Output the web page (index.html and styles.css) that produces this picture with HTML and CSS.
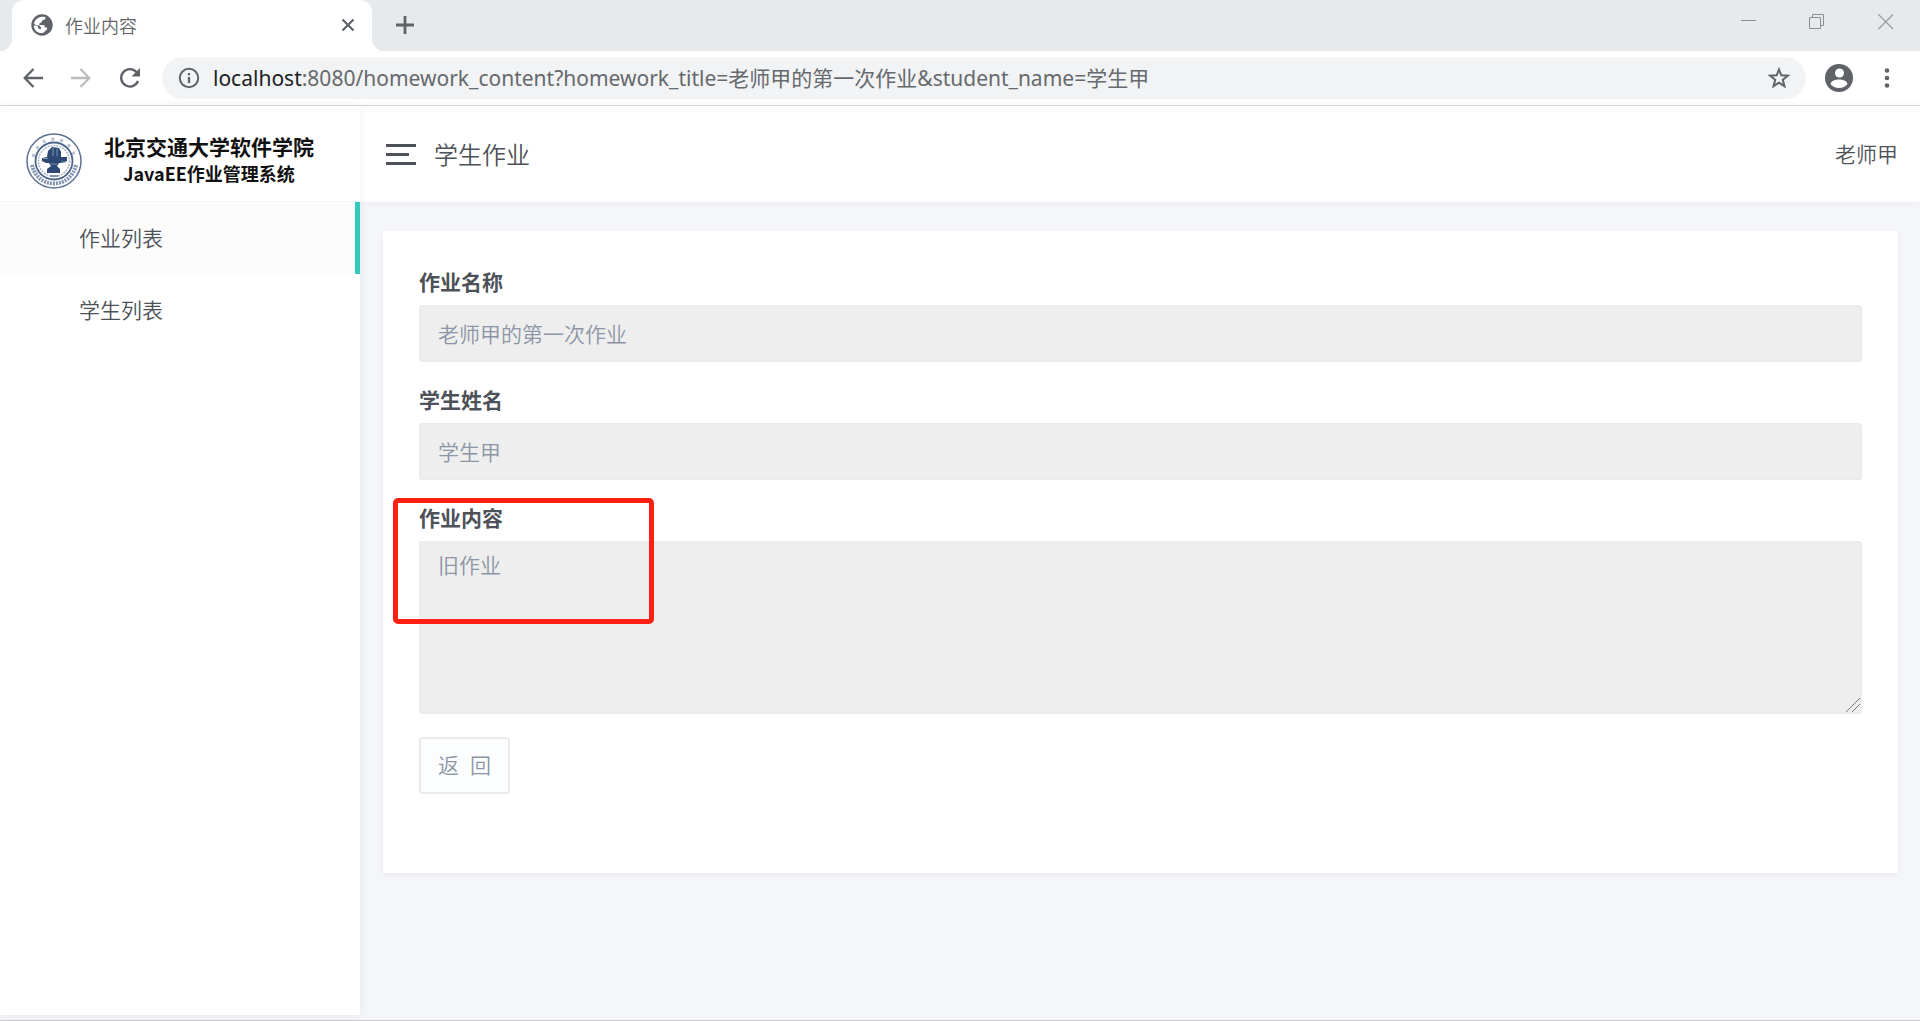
FILE: index.html
```html
<!DOCTYPE html>
<html lang="zh-CN">

<head>
    <meta charset="UTF-8">
    <meta name="viewport" content="width=device-width, initial-scale=1.0">
    <title>作业内容</title>
    <link rel="stylesheet" href="styles.css">
</head>

<body>
    <!-- browser window -->
    <div class="tab-strip">
        <div class="tab-edge"></div>
        <div class="tab">
            <svg class="tab-icon" width="22" height="22" viewBox="0 0 22 22">
                <circle cx="11" cy="11" r="10.700" fill="#5f6368"/>
                <path d="M10.500 2.800C13 2.500 14.500 3 14.500 3.500C14.800 5.500 13 6 11.500 6.200C10.500 6.500 11.500 8.500 9.500 8.800C8 9 8.500 10.500 8 11H12.500C14 11.500 13.500 13 14 13.500H16V15.500L12 19C7 19.800 3 16.500 2.600 11.500L6 12C7.500 12.500 7 15 8.500 15H10V13.500L8.500 11.500H5L3 9.500C4 5.500 7 3.200 10.500 2.800Z" fill="#fff"/>
                <path d="M3 9L6.500 10.500H8.500L7.500 7.500L5 6Z" fill="#fff"/>
            </svg>
            <span class="tab-title">作业内容</span>
            <button class="icon-btn" type="button" aria-label="关闭标签页">
                <svg width="14" height="14" viewBox="0 0 14 14"><path d="M1.500 1.500L12.500 12.500M12.500 1.500L1.500 12.500" stroke="#5f6368" stroke-width="2.200"/></svg>
            </button>
        </div>
        <div class="tab-rest">
            <button class="icon-btn" type="button" aria-label="新标签页">
                <svg width="18" height="18" viewBox="0 0 18 18"><path d="M9 0V18M0 9H18" stroke="#5f6368" stroke-width="2.800"/></svg>
            </button>
            <div class="window-buttons">
                <button class="icon-btn" type="button" aria-label="最小化">
                    <svg width="16" height="16" viewBox="0 0 16 16"><path d="M1 6.500H16" stroke="#8b8e90"/></svg>
                </button>
                <button class="icon-btn" type="button" aria-label="还原">
                    <svg width="16" height="16" viewBox="0 0 16 16"><path d="M.5 3.500H11.500V14.500H.5ZM3.500 3.500V.5H14.500V11.500H11.500" fill="none" stroke="#8b8e90"/></svg>
                </button>
                <button class="icon-btn" type="button" aria-label="关闭">
                    <svg width="16" height="16" viewBox="0 0 16 16"><path d="M.5 .5L15 15M15 .5L.5 15" stroke="#999c9e" stroke-width="1.200"/></svg>
                </button>
            </div>
        </div>
    </div>

    <div class="toolbar">
        <div class="nav-buttons">
            <button class="icon-btn" type="button" aria-label="后退">
                <svg width="20" height="20" viewBox="0 0 20 20"><path d="M20 10H2M10.500 1L1.700 10L10.500 19" fill="none" stroke="#5f6368" stroke-width="2.300"/></svg>
            </button>
            <button class="icon-btn" type="button" aria-label="前进">
                <svg width="20" height="20" viewBox="0 0 20 20"><path d="M0 10H18M9.500 1L18.300 10L9.500 19" fill="none" stroke="#babcbe" stroke-width="2.300"/></svg>
            </button>
            <button class="icon-btn" type="button" aria-label="刷新">
                <svg width="22" height="22" viewBox="0 0 22 22"><path d="M17.500 5.200A8.700 8.700 0 1 0 19 14" fill="none" stroke="#5f6368" stroke-width="2.400"/><path d="M21 1V9.500H12.500Z" fill="#5f6368"/></svg>
            </button>
        </div>
        <div class="address">
            <svg width="22" height="22" viewBox="0 0 22 22"><circle cx="11" cy="11" r="9.200" fill="none" stroke="#5f6368" stroke-width="2"/><path d="M11 10V16M11 6V8.300" stroke="#5f6368" stroke-width="2.300"/></svg>
            <span class="url"><b>localhost</b>:8080/homework_content?homework_title=老师甲的第一次作业&amp;student_name=学生甲</span>
            <button class="icon-btn" type="button" aria-label="收藏">
                <svg width="22" height="22" viewBox="0 0 22 22"><path d="M11 2.500L13.300 8.300L19.800 8.700L14.800 12.800L16.500 19.200L11 15.700L5.500 19.200L7.200 12.800L2.200 8.700L8.700 8.300Z" fill="none" stroke="#5f6368" stroke-width="2"/></svg>
            </button>
        </div>
        <button class="icon-btn" type="button" aria-label="用户">
            <svg width="28" height="28" viewBox="0 0 28 28"><circle cx="14" cy="14" r="14" fill="#5f6368"/><circle cx="14.500" cy="9" r="4.500" fill="#fff"/><path d="M5.500 20C6.500 16.500 10.500 15.500 14 15.500S21.500 16.500 22.500 20C20.500 22.500 17.500 24 14 24S7.500 22.500 5.500 20Z" fill="#fff"/></svg>
        </button>
        <button class="icon-btn" type="button" aria-label="菜单">
            <svg width="6" height="22" viewBox="0 0 6 22"><g fill="#5f6368"><circle cx="3" cy="3.500" r="2.300"/><circle cx="3" cy="11" r="2.300"/><circle cx="3" cy="18.500" r="2.300"/></g></svg>
        </button>
    </div>

    <!-- page -->
    <div class="layout">
        <aside class="sidebar">
            <div class="logo">
                <svg width="56" height="56" viewBox="0 0 56 56">
                    <circle cx="28" cy="28" r="27" fill="#fff" stroke="#5d7193" stroke-width="1.500"/>
                    <path d="M7 24C10 13 18 6 28 6S46 13 49 24" fill="none" stroke="#b9c3d2" stroke-width="3" stroke-dasharray="3 6"/>
                    <path d="M6 32C8.500 43 17 50.500 28 50.500S47.500 43 50 32" fill="none" stroke="#8394b0" stroke-width="4" stroke-dasharray="2 1"/>
                    <circle cx="28" cy="28" r="18.500" fill="#fff" stroke="#4d648a" stroke-width="1.800"/>
                    <circle cx="28" cy="28" r="15.500" fill="none" stroke="#a9b6c9" stroke-width="1.500" stroke-dasharray="2 1"/>
                    <path d="M22 18L26 14L33 15L35 19V24H41V28L36 30H33L31 33L34 36V40H21V36L25 33L23 30H20L16 28V25L21 24Z" fill="#2d4874"/>
                    <path d="M17 25.500H22M35 29H40M25 31H31M27 15V23M31 16V23" stroke="#8193b0"/>
                    <path d="M24 43H32" stroke="#8193b0" stroke-width="2"/>
                </svg>
                <div class="logo-text">
                    <div class="logo-school">北京交通大学软件学院</div>
                    <div class="logo-system">JavaEE作业管理系统</div>
                </div>
            </div>
            <nav class="menu">
                <a class="menu-item active" href="#">作业列表</a>
                <a class="menu-item" href="#">学生列表</a>
            </nav>
        </aside>

        <div class="main">
            <header class="topbar">
                <button class="toggler" type="button" aria-label="切换菜单">
                    <span></span>
                    <span class="short"></span>
                    <span></span>
                </button>
                <h1>学生作业</h1>
                <a class="user" href="#">老师甲</a>
            </header>

            <form class="card">
                <div class="form-group">
                    <label for="title">作业名称</label>
                    <input type="text" id="title" name="homework_title" value="老师甲的第一次作业" disabled>
                </div>
                <div class="form-group">
                    <label for="student">学生姓名</label>
                    <input type="text" id="student" name="student_name" value="学生甲" disabled>
                </div>
                <div class="form-group">
                    <label for="content">作业内容</label>
                    <textarea id="content" name="homework_content" disabled>旧作业</textarea>
                    <div class="highlight"></div>
                </div>
                <button class="btn" type="button">返&nbsp; 回</button>
            </form>
        </div>
    </div>
    <div class="window-bottom"></div>
</body>

</html>
```

FILE: styles.css
```css
* {
    box-sizing: border-box;
}

body {
    display: flex;
    flex-direction: column;
    min-height: 100vh;
    margin: 0;
    font-family: "Noto Sans", "Noto Sans CJK SC", sans-serif;
    font-size: 21px;
    font-weight: 350;
    color: #4d5259;
    background: #f4f6fa;
}

button {
    font: inherit;
    cursor: pointer;
}

a {
    color: inherit;
    text-decoration: none;
}

svg {
    display: block;
    flex: none;
}

.icon-btn {
    padding: 0;
    border: none;
    background: none;
}

/* tabs */
.tab-strip {
    display: flex;
    height: 51px;
    background: #fff;
}

.tab-edge {
    width: 12px;
    background: #e6eaed;
    border-bottom-right-radius: 12px;
}

.tab {
    display: flex;
    align-items: center;
    width: 360px;
    padding: 0 17px 2px 19px;
    background: linear-gradient(#e6eaed, #e6eaed) top / 100% 12px no-repeat;
    position: relative;
    z-index: 0;
}

.tab::before {
    content: "";
    position: absolute;
    inset: 0;
    z-index: -1;
    background: #fff;
    border-radius: 12px 12px 0 0;
}

.tab-title {
    flex: 1;
    margin-left: 12px;
    font-size: 18px;
    color: #5f6368;
}

.tab-rest {
    display: flex;
    flex: 1;
    align-items: center;
    justify-content: space-between;
    padding: 0 26px 2px 24px;
    background: #e6eaed;
    border-bottom-left-radius: 12px;
}

.window-buttons {
    display: flex;
    gap: 53px;
    padding-bottom: 6px;
}

/* address bar */
.toolbar {
    display: flex;
    align-items: center;
    gap: 31px;
    height: 55px;
    padding: 0 30px 0 23px;
    background: #fff;
    border-bottom: 1px solid #d9dadb;
}

.nav-buttons {
    display: flex;
    align-items: center;
    gap: 28px;
}

.address {
    display: flex;
    flex: 1;
    align-items: center;
    height: 42px;
    margin: 0 -12px 0 -10px;
    padding: 0 16px;
    border-radius: 21px;
    background: #f1f3f4;
}

.url {
    flex: 1;
    margin-left: 13px;
    font-size: 21px;
    font-weight: 400;
    line-height: 42px;
    white-space: nowrap;
    color: #66696d;
}

.url b {
    font-weight: 400;
    color: #202124;
}

/* sidebar */
.layout {
    display: flex;
    flex: 1;
}

.sidebar {
    width: 360px;
    margin-bottom: 5px;
    background: #fff;
    box-shadow: 0 0 9px rgba(0, 0, 0, 0.07);
    position: relative;
    z-index: 1;
}

.logo {
    display: flex;
    align-items: center;
    height: 96px;
    padding: 14px 26px 0;
    gap: 22px;
    border-bottom: 1px solid #f4f5f5;
}

.logo-text {
    padding-bottom: 4px;
    font-family: "Noto Sans CJK SC", sans-serif;
    font-weight: 700;
    color: #111;
    text-align: center;
}

.logo-school {
    font-size: 21px;
    line-height: 28px;
}

.logo-system {
    font-size: 18px;
    line-height: 26px;
}

.menu-item {
    display: block;
    height: 72px;
    padding-left: 79px;
    line-height: 72px;
}

.menu-item.active {
    background: #fcfcfc;
    border-right: 5px solid #33cabb;
}

/* content */
.main {
    flex: 1;
}

.topbar {
    display: flex;
    align-items: center;
    height: 96px;
    padding: 0 22px 0 26px;
    background: #fff;
    box-shadow: 0 0 8px rgba(0, 0, 0, 0.06);
}

.toggler {
    display: flex;
    flex-direction: column;
    gap: 6px;
    width: 30px;
    padding: 0;
    border: none;
    background: none;
}

.toggler span {
    width: 30px;
    height: 3px;
    background: #4d5259;
}

.toggler .short {
    width: 23px;
}

h1 {
    flex: 1;
    margin: 0 0 0 18px;
    font-size: 24px;
    font-weight: 350;
}

h1,
.user {
    padding-bottom: 2px;
}

.card {
    margin: 29px 22px 36px 23px;
    padding: 36px 36px 79px;
    background: #fff;
    box-shadow: 0 2px 6px rgba(0, 0, 0, 0.05);
}

.form-group {
    position: relative;
    margin-bottom: 23px;
}

label {
    display: block;
    margin-bottom: 8px;
    font-weight: 700;
    line-height: 30px;
}

input,
textarea {
    display: block;
    width: 100%;
    padding: 7px 17px 9px;
    border: 2px solid #ebebeb;
    border-radius: 3px;
    background: #eee;
    font: inherit;
    line-height: 32px;
    color: #8b95a5;
}

input {
    height: 57px;
}

textarea {
    height: 173px;
    padding-top: 6px;
    resize: vertical;
}

textarea::-webkit-resizer {
    background: linear-gradient(135deg, transparent 52%, #777 52%, #777 56%, transparent 56%, transparent 72%, #777 72%, #777 76%, transparent 76%);
}

.btn {
    height: 57px;
    padding: 0 17px 3px;
    border: 2px solid #ebebeb;
    border-radius: 3px;
    background: #fcfdfe;
    color: #8b95a5;
}

/* red frame over the old homework */
.highlight {
    position: absolute;
    top: -5px;
    left: -26px;
    width: 261px;
    height: 126px;
    border: 5px solid #ff2011;
    border-radius: 5px;
    pointer-events: none;
}

.window-bottom {
    height: 1px;
    background: #cbcbcd;
}
```
